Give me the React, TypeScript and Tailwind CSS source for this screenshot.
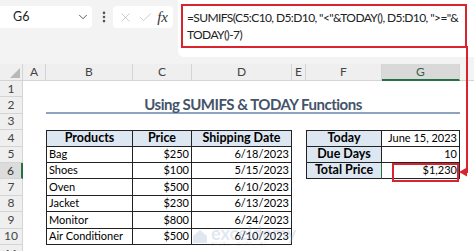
import React from 'react';
import { ChevronDown, EllipsisVertical, X, Check } from 'lucide-react';

const products = [
  { name: 'Bag', price: '$250', date: '6/18/2023' },
  { name: 'Shoes', price: '$100', date: '5/15/2023' },
  { name: 'Oven', price: '$500', date: '6/10/2023' },
  { name: 'Jacket', price: '$230', date: '6/13/2023' },
  { name: 'Monitor', price: '$800', date: '6/24/2023' },
  { name: 'Air Conditioner', price: '$500', date: '6/10/2023' },
];

const summary = [
  { label: 'Today', value: 'June 15, 2023' },
  { label: 'Due Days', value: '10' },
  { label: 'Total Price', value: '$1,230' },
];

function FormulaBar() {
  return (
    <div className="flex h-[57px] items-start font-['Lato',sans-serif]">
      {/* Name box */}
      <div className="mt-[6px] flex h-[22px] w-[92px] shrink-0 items-center justify-between rounded-r-[4px] bg-white pl-[13px] pr-[2px] text-[12.5px] text-[#222]">
        <span>G6</span>
        <ChevronDown size={14} strokeWidth={1.5} className="text-[#444]" />
      </div>
      <div className="ml-[5px] mt-[10px] shrink-0 text-[#555]">
        <EllipsisVertical size={14} strokeWidth={2.5} />
      </div>
      {/* Cancel / enter / fx */}
      <div className="ml-[2px] mt-[6px] flex h-[22px] w-[60px] shrink-0 items-center justify-between rounded-[4px] bg-white px-[5px]">
        <X size={15} strokeWidth={1.1} className="text-[#b5b5b5]" />
        <Check size={15} strokeWidth={1.1} className="text-[#b5b5b5]" />
        <span className="font-['Liberation_Serif',serif] text-[15px] italic leading-none text-[#333]">fx</span>
      </div>
      {/* Formula */}
      <div className="ml-[5px] h-full min-w-0 flex-1 rounded-bl-[6px] bg-white pl-[3px] pr-[7px] pt-[4px]">
        <div className="overflow-hidden border-2 border-[#d9232d] px-[4px] py-[3px] text-[12px] leading-[17px] tracking-[-0.6px] text-[#222]">
          <div className="whitespace-nowrap">=SUMIFS(C5:C10, D5:D10, "&lt;"&amp;TODAY(), D5:D10, "&gt;="&amp;</div>
          <div className="whitespace-nowrap">TODAY()-7)</div>
        </div>
      </div>
    </div>
  );
}

function Sheet() {
  const letters = ['A', 'B', 'C', 'D', 'E', 'F', 'G'];
  const rows = [1, 2, 3, 4, 5, 6, 7, 8, 9, 10, 11];
  return (
    <div className="mt-[7px] grid h-[187px] grid-cols-[23px_23px_87px_59px_100px_14px_76px_78px_1fr] grid-rows-[17px_repeat(10,16.4px)_1fr] bg-white font-['Lato',sans-serif] text-[11px] text-black">
      {/* Corner */}
      <div className="relative border-b border-r border-[#d4d4d4] bg-[#efefef]">
        <svg className="absolute bottom-[2px] right-[2px]" width="10" height="10" viewBox="0 0 10 10">
          <path d="M10 0 V10 H0 Z" fill="#b8b8b8" />
        </svg>
      </div>
      {/* Column headers */}
      {letters.map(l => (
        <div
          key={l}
          className={
            l === 'G'
              ? 'flex items-center justify-center border-b-2 border-r border-b-[#217346] border-r-[#d4d4d4] bg-[#d9d9d9] text-[12px] text-[#3b5e48]'
              : 'flex items-center justify-center border-b border-r border-[#d4d4d4] bg-[#efefef] text-[12px] text-[#444]'
          }
        >
          {l}
        </div>
      ))}
      <div className="border-b border-[#d4d4d4] bg-[#f4f4f4]" />

      {/* Row headers */}
      {rows.map((r, i) => (
        <div
          key={r}
          style={{ gridRow: i + 2 }}
          className={
            r === 6
              ? 'col-start-1 flex items-center justify-center border-b border-r-2 border-b-[#d4d4d4] border-r-[#217346] bg-[#dcdcdc] text-[12px] text-[#333]'
              : 'col-start-1 flex items-center justify-center border-b border-r border-[#d4d4d4] bg-[#efefef] text-[12px] text-[#444]'
          }
        >
          {r}
        </div>
      ))}

      {/* Title, merged B2:G2 */}
      <div className="col-span-6 col-start-3 row-start-3 flex items-center justify-center whitespace-nowrap border-b-2 border-[#8fa3c0] text-[15px] font-bold tracking-[-0.5px] text-[#44546a]">
        Using SUMIFS &amp; TODAY Functions
      </div>

      {/* Products table B4:D10 */}
      <div className="col-span-3 col-start-3 row-span-7 row-start-5 grid grid-cols-subgrid grid-rows-subgrid border-l border-t border-[#222]">
        {['Products', 'Price', 'Shipping Date'].map(h => (
          <div key={h} className="flex items-center justify-center whitespace-nowrap border-b border-r border-[#222] bg-[#dde7f2] text-[12.5px] font-bold">
            {h}
          </div>
        ))}
        {products.map(p => (
          <React.Fragment key={p.name}>
            <div className="flex items-center whitespace-nowrap border-b border-r border-[#222] pl-[2px]">{p.name}</div>
            <div className="flex items-center justify-end border-b border-r border-[#222] pr-[2px]">{p.price}</div>
            <div className="flex items-center justify-end border-b border-r border-[#222] pr-[2px]">{p.date}</div>
          </React.Fragment>
        ))}
      </div>

      {/* Summary table F4:G6 */}
      <div className="col-span-2 col-start-7 row-span-3 row-start-5 grid grid-cols-subgrid grid-rows-subgrid border-l border-t border-[#222]">
        {summary.map((s, i) => (
          <React.Fragment key={s.label}>
            <div
              className={
                i === 2
                  ? 'flex items-center justify-center whitespace-nowrap border-b border-r border-b-[#222] border-r-[#217346] bg-[#dde7f2] text-[12.5px] font-bold'
                  : 'flex items-center justify-center whitespace-nowrap border-b border-r border-[#222] bg-[#dde7f2] text-[12.5px] font-bold'
              }
            >
              {s.label}
            </div>
            <div className="flex items-center justify-end whitespace-nowrap border-b border-r border-[#222] pr-[2px]">{s.value}</div>
          </React.Fragment>
        ))}
      </div>
    </div>
  );
}

function Watermark() {
  return (
    <div className="pointer-events-none absolute left-[192px] top-[224px] flex items-center gap-[3px] text-[#8aa3c6] opacity-25">
      <svg width="16" height="16" viewBox="0 0 16 16">
        <path d="M1 8 L8 2 L15 8 L15 15 L1 15 Z" fill="currentColor" />
      </svg>
      <div className="flex flex-col leading-none">
        <span className="font-['Lato',sans-serif] text-[18px] font-bold">exceldemy</span>
        <span className="text-[5px] tracking-[1px]">EXCEL · DATA · BI</span>
      </div>
    </div>
  );
}

function Annotations() {
  return (
    <svg className="pointer-events-none absolute left-0 top-0" width="474" height="251">
      <rect x="393" y="164" width="65" height="17" fill="none" stroke="#d9232d" strokeWidth="2" />
      <path d="M467 46 V172 H464" fill="none" stroke="#d9232d" strokeWidth="2" />
      <path d="M459 172 L467 167.5 L467 176.5 Z" fill="#d9232d" />
    </svg>
  );
}

export default function App() {
  return (
    <div className="relative h-[251px] w-[474px] overflow-hidden bg-[#f3f3f3]">
      <FormulaBar />
      <Sheet />
      <Watermark />
      <Annotations />
    </div>
  );
}
